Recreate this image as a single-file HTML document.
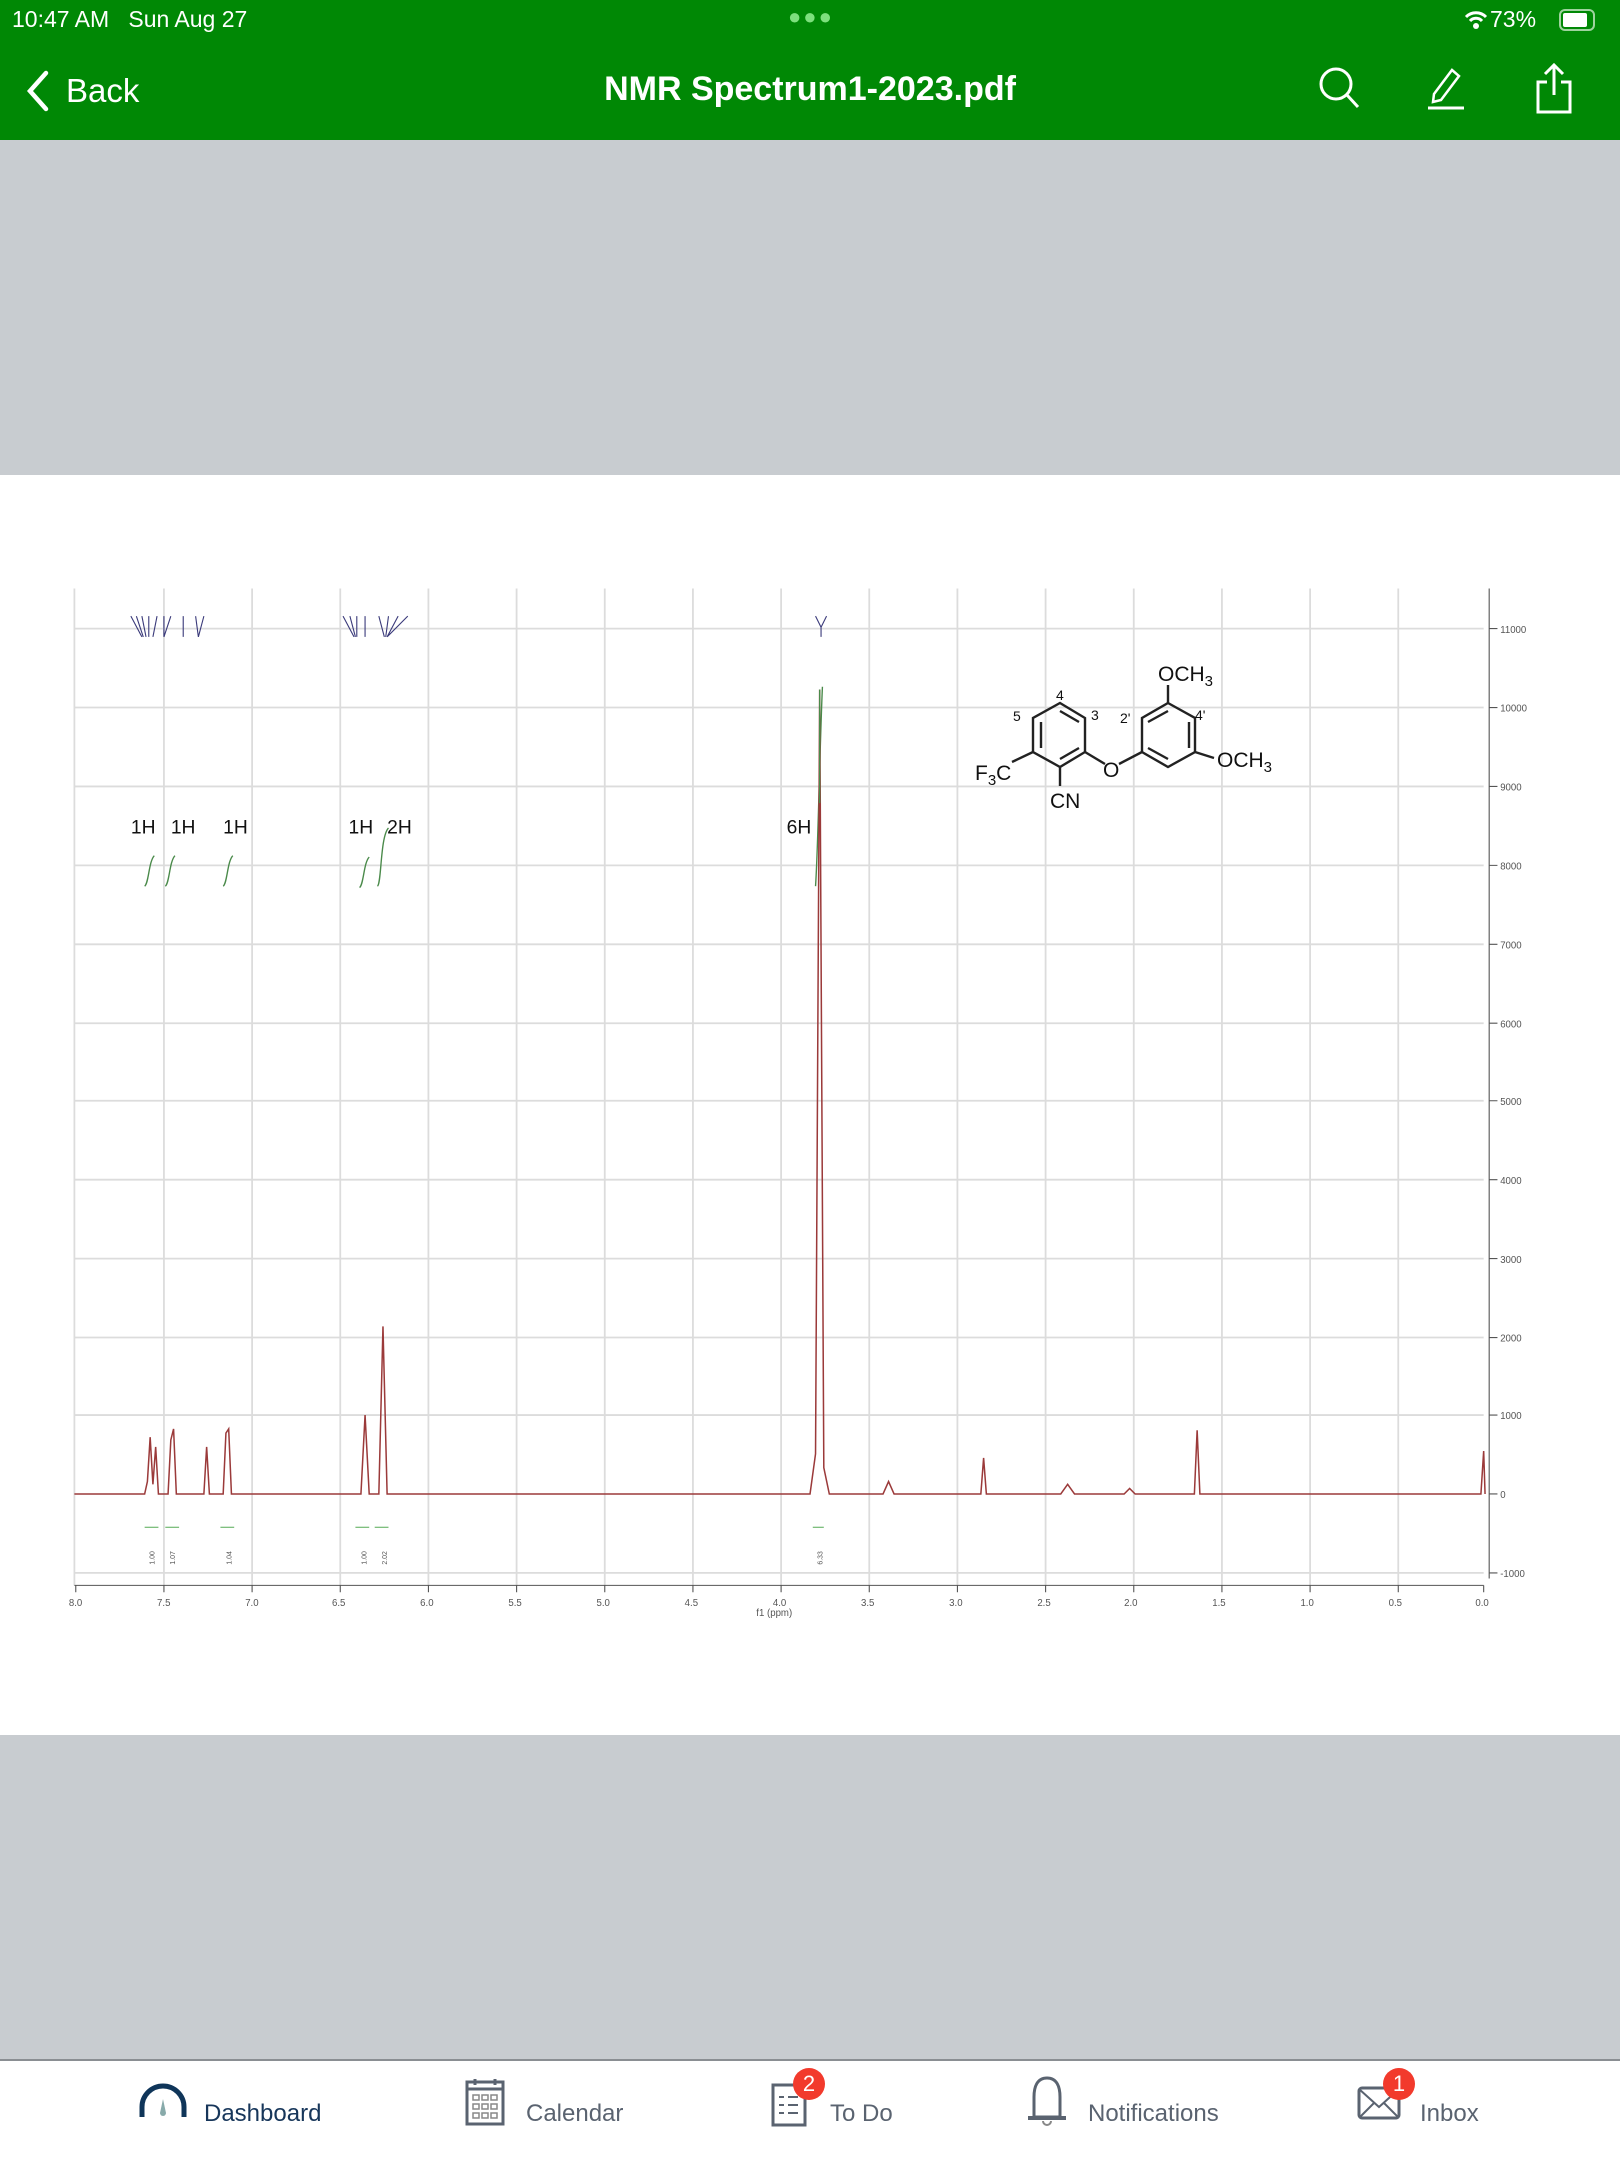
<!DOCTYPE html>
<html><head><meta charset="utf-8"><style>
*{margin:0;padding:0;box-sizing:border-box}
body{width:1620px;height:2160px;position:relative;background:#c8ccd0;font-family:"Liberation Sans",sans-serif;overflow:hidden}
.hdr{position:absolute;left:0;top:0;width:1620px;height:140px;background:#008805;color:#fff}
.t{position:absolute;white-space:nowrap}
.page{position:absolute;left:0;top:475px;width:1620px;height:1260px;background:#fff}
.bar{position:absolute;left:0;top:2059px;width:1620px;height:101px;background:#fff;border-top:2px solid #8a8e92}
.lbl{position:absolute;top:2100px;font-size:24px;color:#5a6370}
.badge{position:absolute;width:32px;height:32px;border-radius:16px;background:#f23a2c;color:#fff;font-size:22px;text-align:center;line-height:32px}
</style></head><body>
<div class="hdr">
 <div class="t" style="left:12px;top:6px;font-size:23px">10:47 AM&nbsp;&nbsp; Sun Aug 27</div>
 <div class="t" style="left:788px;top:4px;font-size:22px;color:#7de07d;letter-spacing:2px">●●●</div>
 <div class="t" style="left:1490px;top:6px;font-size:23px">73%</div>
 <div style="position:absolute;left:1559px;top:9px;width:36px;height:22px;border:2px solid #9fd39f;border-radius:6px;padding:2px"><div style="width:24px;height:14px;background:#fff;border-radius:2px"></div></div>
 <svg style="position:absolute;left:1464px;top:10px" width="24" height="20" viewBox="0 0 24 20"><path d="M2 7a14 14 0 0 1 20 0M6 11a8 8 0 0 1 12 0" stroke="#fff" stroke-width="3" fill="none"/><circle cx="12" cy="16" r="3" fill="#fff"/></svg>
 <svg style="position:absolute;left:24px;top:70px" width="26" height="42" viewBox="0 0 26 42"><path d="M22 3L6 21l16 18" stroke="#fff" stroke-width="4.5" fill="none" stroke-linecap="round"/></svg>
 <div class="t" style="left:66px;top:72px;font-size:33px">Back</div>
 <div class="t" style="left:0;width:1620px;text-align:center;top:70px;font-size:34px;font-weight:bold">NMR Spectrum1-2023.pdf</div>
 <svg style="position:absolute;left:1318px;top:66px" width="46" height="46" viewBox="0 0 46 46"><circle cx="18" cy="18" r="15" stroke="#fff" stroke-width="3" fill="none"/><path d="M29 29l11 12" stroke="#fff" stroke-width="3"/></svg>
 <svg style="position:absolute;left:1424px;top:66px" width="44" height="46" viewBox="0 0 44 46"><path d="M28 4l7 6-18 24-8 2 1-8z" stroke="#fff" stroke-width="2.5" fill="none"/><path d="M4 42h36" stroke="#fff" stroke-width="3"/></svg>
 <svg style="position:absolute;left:1534px;top:62px" width="40" height="52" viewBox="0 0 40 52"><path d="M20 3v30M11 12l9-9 9 9M13 20H4v30h32V20h-9" stroke="#fff" stroke-width="3" fill="none"/></svg>
</div>
<div class="page"></div>
<svg style="position:absolute;left:0;top:0" width="1620" height="2160" viewBox="0 0 1620 2160">
<g transform="scale(1.3776,1.3846)" font-family="Liberation Sans">
 <g stroke="#dcdcdc" stroke-width="1.3">
  <path d="M54 454H1077M54 511H1077M54 568H1077M54 625H1077M54 682H1077M54 739H1077M54 795H1077M54 852H1077M54 909H1077M54 966H1077M54 1022H1077M54 1136H1077"/>
  <path d="M119 425V1145M183 425V1145M247 425V1145M311 425V1145M375 425V1145M439 425V1145M503 425V1145M567 425V1145M631 425V1145M695 425V1145M759 425V1145M823 425V1145M887 425V1145M951 425V1145M1015 425V1145M54 425V1145"/>
 </g>
 <path d="M54 1145H1077M1081 425V1140" stroke="#555" stroke-width="0.8" fill="none"/>
 <g stroke="#555" stroke-width="0.8"><path d="M55 1145v5M119 1145v5M183 1145v5M247 1145v5M311 1145v5M375 1145v5M439 1145v5M503 1145v5M567 1145v5M631 1145v5M695 1145v5M759 1145v5M823 1145v5M887 1145v5M951 1145v5M1015 1145v5M1077 1145v5"/>
 <path d="M1081 454h6M1081 511h6M1081 568h6M1081 625h6M1081 682h6M1081 739h6M1081 795h6M1081 852h6M1081 909h6M1081 966h6M1081 1022h6M1081 1079h6M1081 1136h6"/></g>
 <g font-size="7" fill="#555">
  <text x="50" y="1160">8.0</text><text x="114" y="1160">7.5</text><text x="178" y="1160">7.0</text><text x="241" y="1160">6.5</text><text x="305" y="1160">6.0</text><text x="369" y="1160">5.5</text><text x="433" y="1160">5.0</text><text x="497" y="1160">4.5</text><text x="561" y="1160">4.0</text><text x="549" y="1167">f1 (ppm)</text><text x="625" y="1160">3.5</text><text x="689" y="1160">3.0</text><text x="753" y="1160">2.5</text><text x="816" y="1160">2.0</text><text x="880" y="1160">1.5</text><text x="944" y="1160">1.0</text><text x="1008" y="1160">0.5</text><text x="1071" y="1160">0.0</text>
  <text x="1089" y="457">11000</text><text x="1089" y="514">10000</text><text x="1089" y="571">9000</text><text x="1089" y="628">8000</text><text x="1089" y="685">7000</text><text x="1089" y="742">6000</text><text x="1089" y="798">5000</text><text x="1089" y="855">4000</text><text x="1089" y="912">3000</text><text x="1089" y="969">2000</text><text x="1089" y="1025">1000</text><text x="1089" y="1082">0</text><text x="1089" y="1139">-1000</text>
 </g>
 <g font-size="14" fill="#111"><text x="95" y="602">1H</text><text x="124" y="602">1H</text><text x="162" y="602">1H</text><text x="253" y="602">1H</text><text x="281" y="602">2H</text><text x="571" y="602">6H</text></g>
 <g stroke="#4a8a4a" stroke-width="1" fill="none">
  <path d="M105 640c3-2 3-18 7-22M120 640c3-2 3-18 7-22M162 640c3-2 3-18 7-22M261 641c3-2 3-18 7-22M274 640c3-2 2-36 8-42M592 640c2-30 3-100 5-144"/>
 </g>
 <g stroke="#3a3a7a" stroke-width="0.8" fill="none">
  <path d="M95 445l8 15M99 445l5 15M103 445l3 15M108 445v15M114 445l-3 15M119 445v15M124 445l-5 15M133 445v15M142 445l2 15M148 445l-4 15M249 445l8 15M254 445l4 15M259 445v15M265 445v15M275 445l4 15M282 445l-2 15M289 445l-8 15M296 445l-15 15M592 445l4 8M600 445l-4 8M596 453v7"/>
 </g>
 <path d="M54 1079H105L107 1070L109 1038L111 1072L113 1045L115 1079H122L124 1040L126 1032L128 1079H148L150 1045L152 1079H162L164 1035L166 1032L168 1079H262L265 1022L268 1079H275L278 958L281 1079H330H588L592 1050L595 498L598 1060L602 1079H641L645 1070L649 1079H712L714 1053L716 1079H770L775 1072L780 1079H816L820 1075L824 1079H867L869 1033L871 1079H1075L1077 1048L1078 1079" stroke="#9b3a3a" stroke-width="1.1" fill="none"/>
 <path d="M595 498v82" stroke="#4a8a4a" stroke-width="1"/>
 <g stroke="#5a5" stroke-width="0.7"><path d="M105 1103h10M120 1103h10M160 1103h10M258 1103h10M272 1103h10M590 1103h8"/></g>
 <g font-size="5" fill="#555"><text transform="translate(112,1130) rotate(-90)">1.00</text><text transform="translate(127,1130) rotate(-90)">1.07</text><text transform="translate(168,1130) rotate(-90)">1.04</text><text transform="translate(266,1130) rotate(-90)">1.00</text><text transform="translate(281,1130) rotate(-90)">2.02</text><text transform="translate(597,1130) rotate(-90)">6.33</text></g>
</g>
<g stroke="#222" stroke-width="2.4" fill="none">
 <path d="M1060 703L1085 718V752L1060 767L1033 752V718Z"/>
 <path d="M1060 711L1079 722M1041 722V748M1060 759L1079 748"/>
 <path d="M1168 703L1195 718V752L1168 767L1142 752V718Z"/>
 <path d="M1148 722L1168 711M1189 722V748M1148 748L1168 759"/>
 <path d="M1085 752L1105 764M1119 764L1142 752M1168 703V685M1195 752L1214 758M1033 752L1012 762M1060 767V786"/>
</g>
<g font-family="Liberation Sans" font-size="21" fill="#111">
 <text x="1103" y="777">O</text>
 <text x="975" y="780">F<tspan font-size="15" dy="5">3</tspan><tspan dy="-5">C</tspan></text>
 <text x="1050" y="808">CN</text>
 <text x="1158" y="681">OCH<tspan font-size="15" dy="5">3</tspan></text>
 <text x="1217" y="767">OCH<tspan font-size="15" dy="5">3</tspan></text>
 <text x="1056" y="700" font-size="14">4</text>
 <text x="1013" y="721" font-size="14">5</text>
 <text x="1091" y="720" font-size="14">3</text>
 <text x="1120" y="723" font-size="14">2'</text>
 <text x="1195" y="720" font-size="14">4'</text>
</g>
</svg>
<div class="bar"></div>
<svg style="position:absolute;left:138px;top:2083px" width="50" height="36" viewBox="0 0 50 36"><path d="M4 34V24A21 21 0 0 1 46 24V34" stroke="#0f3559" stroke-width="5" fill="none"/><path d="M25 16l3 14a3 3 0 0 1-6 0z" fill="#8aa"/></svg>
<div class="lbl" style="left:204px;color:#17365a">Dashboard</div>
<svg style="position:absolute;left:464px;top:2077px" width="44" height="50" viewBox="0 0 44 50"><rect x="3" y="5" width="36" height="42" stroke="#5a6370" stroke-width="3" fill="none"/><path d="M3 12h36M11 2v6M31 2v6" stroke="#5a6370" stroke-width="3"/><g fill="none" stroke="#888" stroke-width="1.5"><rect x="9" y="18" width="6" height="5"/><rect x="18" y="18" width="6" height="5"/><rect x="27" y="18" width="6" height="5"/><rect x="9" y="27" width="6" height="5"/><rect x="18" y="27" width="6" height="5"/><rect x="27" y="27" width="6" height="5"/><rect x="9" y="36" width="6" height="5"/><rect x="18" y="36" width="6" height="5"/><rect x="27" y="36" width="6" height="5"/></g></svg>
<div class="lbl" style="left:526px">Calendar</div>
<svg style="position:absolute;left:770px;top:2079px" width="40" height="50" viewBox="0 0 40 50"><rect x="3" y="6" width="32" height="40" stroke="#5a6370" stroke-width="3" fill="none"/><path d="M9 18h5M18 18h10M9 26h5M18 26h10M9 34h5M18 34h10" stroke="#5a6370" stroke-width="2"/></svg>
<div class="badge" style="left:793px;top:2068px">2</div>
<div class="lbl" style="left:830px">To Do</div>
<svg style="position:absolute;left:1024px;top:2075px" width="46" height="54" viewBox="0 0 46 54"><path d="M23 3C13 3 10 12 10 22V42H36V22C36 12 33 3 23 3Z" stroke="#5a6370" stroke-width="3" fill="none"/><path d="M4 43h38" stroke="#5a6370" stroke-width="4"/><path d="M19 46a4 4 0 0 0 8 0" stroke="#888" stroke-width="2" fill="none"/></svg>
<div class="lbl" style="left:1088px">Notifications</div>
<svg style="position:absolute;left:1356px;top:2085px" width="46" height="36" viewBox="0 0 46 36"><rect x="3" y="3" width="40" height="30" rx="3" stroke="#5a6370" stroke-width="3" fill="none"/><path d="M3 4l20 18L43 4M4 32l14-14M42 32L28 18" stroke="#5a6370" stroke-width="2" fill="none"/></svg>
<div class="badge" style="left:1383px;top:2068px">1</div>
<div class="lbl" style="left:1420px">Inbox</div>
</body></html>
